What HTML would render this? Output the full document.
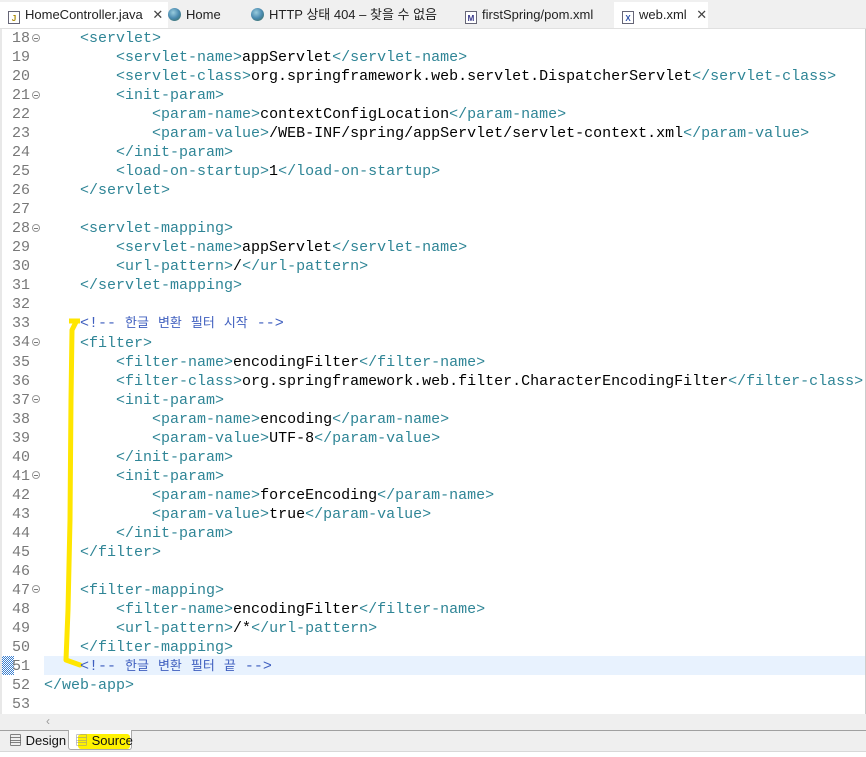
<!DOCTYPE html>
<html><head><meta charset="utf-8"><style>
body{margin:0;width:866px;height:757px;overflow:hidden;background:#fff;font-family:"Liberation Sans","Noto Sans CJK KR",sans-serif;position:relative}
.tabs{position:absolute;left:0;top:0;width:866px;height:28px;background:#f0f0f0;border-bottom:1px solid #e0e0e0}
.tab{position:absolute;top:2px;height:26px;font-size:13px;line-height:26px;color:#222;white-space:nowrap}
.ic{display:inline-block;width:12px;height:13px;vertical-align:-2px;margin-right:5px;border:1px solid #667;background:#fff;font-size:8px;line-height:13px;text-align:center;color:#35a;font-weight:bold;box-sizing:border-box}
.globe{display:inline-block;width:13px;height:13px;border-radius:50%;background:radial-gradient(circle at 40% 35%,#9cd 0,#4a8ab0 50%,#3a6a50 100%);vertical-align:-2px;margin-right:5px}
.code{position:absolute;left:0;top:29px;width:866px;font-family:"Liberation Mono","Noto Sans CJK KR",monospace;font-size:15px;line-height:19.03px}
.ln{position:absolute;left:12px;color:#787878}
.tx{position:absolute;left:44px;top:0;color:#000;white-space:pre}
.t{color:#2f8596}.c{color:#3f5fbf}
.k{font-size:13px;letter-spacing:0;line-height:10px}
.fold{position:absolute;left:32px;width:8px;height:8px;border:1px solid #999;border-radius:50%;box-sizing:border-box}
.fold:after{content:"";position:absolute;left:1px;top:3px;width:4px;height:1px;background:#777}
</style></head><body>
<div class="tabs">
<div class="tab" style="left:0;width:160px;background:#fff;padding-left:8px"><span class="ic" style="color:#a80">J</span>HomeController.java <span style="margin-left:6px;color:#444">✕</span></div>
<div class="tab" style="left:168px"><span class="globe"></span>Home</div>
<div class="tab" style="left:251px"><span class="globe"></span>HTTP 상태 404 – 찾을 수 없음</div>
<div class="tab" style="left:465px"><span class="ic" style="color:#338">M</span>firstSpring/pom.xml</div>
<div class="tab" style="left:614px;width:94px;background:#fff;padding-left:8px;box-sizing:border-box"><span class="ic">X</span>web.xml <span style="margin-left:6px;color:#444">✕</span></div>
</div>
<div style="position:absolute;left:0;top:29px;width:2px;height:685px;background:#e8e8e8"></div>
<div style="position:absolute;left:44px;top:656px;width:822px;height:19px;background:#e8f2fe"></div>
<div style="position:absolute;left:2px;top:656px;width:12px;height:19px;background:repeating-conic-gradient(#3a7fd0 0 25%,#fff 0 50%) 0 0/2px 2px"></div>
<svg style="position:absolute;left:0;top:0" width="866" height="757">
<path d="M76 322 L72 330 L71 400 L70 520 L68 610 L66 660 L80 665" fill="none" stroke="#ffe600" stroke-width="5" stroke-linecap="round" stroke-linejoin="round"/>
<path d="M69 321 L80 321" stroke="#ffe600" stroke-width="5"/>
</svg>
<div class="code"><div class="ln" style="top:0">18</div><div class="ln" style="top:19.03px">19</div><div class="ln" style="top:38.06px">20</div><div class="ln" style="top:57.09px">21</div><div class="ln" style="top:76.12px">22</div><div class="ln" style="top:95.15px">23</div><div class="ln" style="top:114.18px">24</div><div class="ln" style="top:133.21px">25</div><div class="ln" style="top:152.24px">26</div><div class="ln" style="top:171.27px">27</div><div class="ln" style="top:190.3px">28</div><div class="ln" style="top:209.33px">29</div><div class="ln" style="top:228.36px">30</div><div class="ln" style="top:247.39px">31</div><div class="ln" style="top:266.42px">32</div><div class="ln" style="top:285.45px">33</div><div class="ln" style="top:304.48px">34</div><div class="ln" style="top:323.51px">35</div><div class="ln" style="top:342.54px">36</div><div class="ln" style="top:361.57px">37</div><div class="ln" style="top:380.6px">38</div><div class="ln" style="top:399.63px">39</div><div class="ln" style="top:418.66px">40</div><div class="ln" style="top:437.69px">41</div><div class="ln" style="top:456.72px">42</div><div class="ln" style="top:475.75px">43</div><div class="ln" style="top:494.78px">44</div><div class="ln" style="top:513.81px">45</div><div class="ln" style="top:532.84px">46</div><div class="ln" style="top:551.87px">47</div><div class="ln" style="top:570.9px">48</div><div class="ln" style="top:589.93px">49</div><div class="ln" style="top:608.96px">50</div><div class="ln" style="top:627.99px">51</div><div class="ln" style="top:647.02px">52</div><div class="ln" style="top:666.05px">53</div><div class="fold" style="top:5px"></div><div class="fold" style="top:62px"></div><div class="fold" style="top:195px"></div><div class="fold" style="top:309px"></div><div class="fold" style="top:366px"></div><div class="fold" style="top:442px"></div><div class="fold" style="top:556px"></div><div class="tx">    <span class="t">&lt;servlet&gt;</span>
        <span class="t">&lt;servlet-name&gt;</span>appServlet<span class="t">&lt;/servlet-name&gt;</span>
        <span class="t">&lt;servlet-class&gt;</span>org.springframework.web.servlet.DispatcherServlet<span class="t">&lt;/servlet-class&gt;</span>
        <span class="t">&lt;init-param&gt;</span>
            <span class="t">&lt;param-name&gt;</span>contextConfigLocation<span class="t">&lt;/param-name&gt;</span>
            <span class="t">&lt;param-value&gt;</span>/WEB-INF/spring/appServlet/servlet-context.xml<span class="t">&lt;/param-value&gt;</span>
        <span class="t">&lt;/init-param&gt;</span>
        <span class="t">&lt;load-on-startup&gt;</span>1<span class="t">&lt;/load-on-startup&gt;</span>
    <span class="t">&lt;/servlet&gt;</span>

    <span class="t">&lt;servlet-mapping&gt;</span>
        <span class="t">&lt;servlet-name&gt;</span>appServlet<span class="t">&lt;/servlet-name&gt;</span>
        <span class="t">&lt;url-pattern&gt;</span>/<span class="t">&lt;/url-pattern&gt;</span>
    <span class="t">&lt;/servlet-mapping&gt;</span>

    <span class="c">&lt;!-- <span class="k">한글</span> <span class="k">변환</span> <span class="k">필터</span> <span class="k">시작</span> --&gt;</span>
    <span class="t">&lt;filter&gt;</span>
        <span class="t">&lt;filter-name&gt;</span>encodingFilter<span class="t">&lt;/filter-name&gt;</span>
        <span class="t">&lt;filter-class&gt;</span>org.springframework.web.filter.CharacterEncodingFilter<span class="t">&lt;/filter-class&gt;</span>
        <span class="t">&lt;init-param&gt;</span>
            <span class="t">&lt;param-name&gt;</span>encoding<span class="t">&lt;/param-name&gt;</span>
            <span class="t">&lt;param-value&gt;</span>UTF-8<span class="t">&lt;/param-value&gt;</span>
        <span class="t">&lt;/init-param&gt;</span>
        <span class="t">&lt;init-param&gt;</span>
            <span class="t">&lt;param-name&gt;</span>forceEncoding<span class="t">&lt;/param-name&gt;</span>
            <span class="t">&lt;param-value&gt;</span>true<span class="t">&lt;/param-value&gt;</span>
        <span class="t">&lt;/init-param&gt;</span>
    <span class="t">&lt;/filter&gt;</span>

    <span class="t">&lt;filter-mapping&gt;</span>
        <span class="t">&lt;filter-name&gt;</span>encodingFilter<span class="t">&lt;/filter-name&gt;</span>
        <span class="t">&lt;url-pattern&gt;</span>/*<span class="t">&lt;/url-pattern&gt;</span>
    <span class="t">&lt;/filter-mapping&gt;</span>
    <span class="c">&lt;!-- <span class="k">한글</span> <span class="k">변환</span> <span class="k">필터</span> <span class="k">끝</span> --&gt;</span>
<span class="t">&lt;/web-app&gt;</span></div></div>
<div style="position:absolute;left:0;top:714px;width:866px;height:16px;background:#efefef;border-bottom:1px solid #a0a0a0;font-size:12px;color:#999;line-height:14px"><span style="margin-left:46px">‹</span></div>
<div style="position:absolute;left:0;top:731px;width:866px;height:20px;background:#efefef;border-bottom:1px solid #d8d8d8"></div>
<div style="position:absolute;left:68px;top:730px;width:64px;height:20px;background:#fff;border:1px solid #aaa;border-top:none;border-radius:0 0 3px 3px;box-sizing:border-box"></div>
<div style="position:absolute;left:78px;top:734px;width:52px;height:15px;background:#fff200;border-radius:3px"></div>
<div style="position:absolute;left:9px;top:731px;font-size:13px;line-height:20px;color:#111">▤ Design</div>
<div style="position:absolute;left:75px;top:731px;font-size:13px;line-height:20px;color:#111"><span style="color:#889">▤</span> Source</div>
<div style="position:absolute;right:0;top:29px;width:1px;height:685px;background:#ccc"></div>
</body></html>
